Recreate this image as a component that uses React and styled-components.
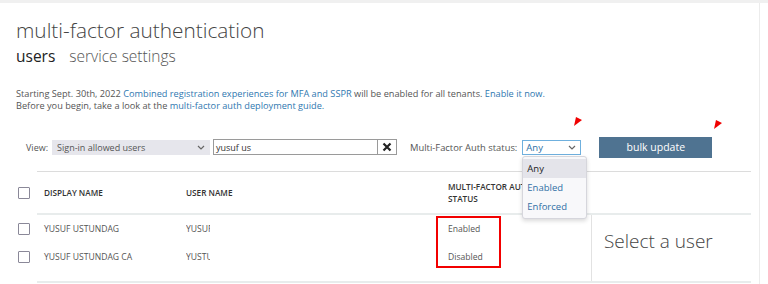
import React from "react";
import styled, { createGlobalStyle } from "styled-components";

const GlobalStyle = createGlobalStyle`
  body {
    margin: 0;
    background: #ffffff;
    font-family: "Open Sans", "Noto Sans", sans-serif;
    color: #444;
  }
`;

const Page = styled.div`
  position: relative;
  width: 768px;
  height: 284px;
  overflow: hidden;
  box-sizing: border-box;
  border-top: 3px solid #f0f0f0;
`;

const Frame = styled.div`
  width: 760px;
  height: 100%;
  box-sizing: border-box;
  border-right: 1px solid #ececec;
  padding-top: 14px;
`;

const Title = styled.h1`
  margin: 0 0 0 16px;
  font-size: 20.8px;
  line-height: 26px;
  font-weight: 300;
  color: #444;
`;

const Tabs = styled.div`
  display: flex;
  gap: 14px;
  margin: 3px 0 0 16px;
  font-size: 15.5px;
  line-height: 21px;
`;

const Tab = styled.span`
  color: ${(p) => (p.active ? "#222" : "#555")};
  font-weight: ${(p) => (p.active ? 400 : 300)};
`;

const Info = styled.div`
  margin: 21px 0 0 16px;
  font-size: 9.2px;
  line-height: 12px;
  color: #555;
`;

const Link = styled.a`
  color: #2f78b0;
  text-decoration: none;
`;

const Toolbar = styled.div`
  display: flex;
  align-items: center;
  height: 22px;
  margin-top: 24px;
  padding-left: 26px;
  font-size: 9px;
  color: #555;
`;

const Label = styled.span`
  margin-right: ${(p) => p.gap || 4}px;
  font-size: ${(p) => p.size || 9}px;
`;

const ViewSelect = styled.div`
  display: flex;
  align-items: center;
  justify-content: space-between;
  box-sizing: border-box;
  width: 158px;
  height: 15px;
  padding: 0 5px;
  background: #e6e6ec;
  color: #555;
`;

const Search = styled.div`
  display: flex;
  align-items: center;
  box-sizing: border-box;
  width: 165px;
  height: 16px;
  margin-left: 3px;
  padding-left: 2px;
  border: 1px solid #9a9a9a;
  color: #333;
`;

const ClearBtn = styled.div`
  display: flex;
  align-items: center;
  justify-content: center;
  box-sizing: border-box;
  width: 19px;
  height: 16px;
  border: 1px solid #9a9a9a;
  border-left: none;
  margin-right: 13px;
`;

const StatusWrap = styled.div`
  position: relative;
`;

const StatusSelect = styled.div`
  display: flex;
  align-items: center;
  justify-content: space-between;
  box-sizing: border-box;
  width: 59px;
  height: 15px;
  padding: 0 4px 0 3px;
  border: 1px solid #6fb0de;
  color: #2e6fa5;
  font-size: 9.5px;
`;

const Menu = styled.div`
  position: absolute;
  top: 16px;
  left: 0;
  width: 65px;
  box-sizing: border-box;
  padding: 2px 0;
  background: #f8f8fa;
  border: 1px solid #d6d6dc;
  border-radius: 3px;
  box-shadow: 0 2px 4px rgba(0, 0, 0, 0.15);
  z-index: 2;
`;

const MenuItem = styled.div`
  height: 19px;
  line-height: 19px;
  padding-left: 4px;
  font-size: 9.5px;
  color: ${(p) => (p.selected ? "#222" : "#2f6fa5")};
  background: ${(p) => (p.selected ? "#e4e4ea" : "transparent")};
`;

const BulkButton = styled.button`
  width: 113px;
  height: 21px;
  margin-left: 18px;
  border: none;
  background: #4f7391;
  color: #fff;
  font-family: "Open Sans", sans-serif;
  font-size: 10.5px;
`;

const Table = styled.div`
  margin: 13px 0 0 16px;
  width: 735px;
`;

const Row = styled.div`
  display: flex;
`;

const CheckCell = styled.div`
  width: 21px;
  display: flex;
  align-items: center;
  height: ${(p) => p.h}px;
`;

const CheckColumn = styled.div`
  display: flex;
  flex-direction: column;
`;

const Box = styled.span`
  display: block;
  width: 12px;
  height: 12px;
  margin-left: 2px;
  box-sizing: border-box;
  border: 1.5px solid #8a8898;
  border-radius: 1px;
`;

const HeadMain = styled.div`
  flex: 1;
  display: grid;
  grid-template-columns: 142px 262px 150px 1fr;
  align-items: center;
  height: 41px;
  border-top: 1px solid #dcdcdc;
  border-bottom: 2px solid #e8ecec;
`;

const HeadCell = styled.div`
  padding-left: 7px;
  font-size: 8.2px;
  line-height: 12px;
  font-weight: 600;
  color: #333;
`;

const BodyMain = styled.div`
  flex: 1;
  display: flex;
  height: 66px;
  border-bottom: 2px solid #e8ecec;
`;

const Rows = styled.div`
  width: 554px;
`;

const DataRow = styled.div`
  display: grid;
  grid-template-columns: 142px 262px 150px;
  align-items: center;
  height: 28px;
`;

const Cell = styled.div`
  padding-left: 7px;
  font-size: 8.6px;
  color: #555;
  white-space: nowrap;
  overflow: hidden;
`;

const Clip = styled.span`
  display: inline-block;
  max-width: ${(p) => p.w}px;
  overflow: hidden;
  vertical-align: top;
`;

const SidePanel = styled.div`
  flex: 1;
  border-left: 1px solid #e2e2e2;
  padding: 13px 0 0 12px;
  font-size: 19px;
  line-height: 26px;
  font-weight: 300;
  color: #444;
`;

const Highlight = styled.div`
  position: absolute;
  left: 436px;
  top: 213px;
  width: 65px;
  height: 52px;
  box-sizing: border-box;
  border: 2px solid #f20000;
`;

const Pointer = styled.svg`
  position: absolute;
  left: ${(p) => p.x}px;
  top: ${(p) => p.y}px;
`;

const Chevron = () => (
  <svg width="8" height="5" viewBox="0 0 8 5">
    <polyline points="1,1 4,4 7,1" fill="none" stroke="#666" strokeWidth="1.2" />
  </svg>
);

const Cross = () => (
  <svg width="10" height="10" viewBox="0 0 10 10">
    <path d="M1.5 1.5 L8.5 8.5 M8.5 1.5 L1.5 8.5" stroke="#222" strokeWidth="2.2" />
  </svg>
);

const Arrow = ({ x, y }) => (
  <Pointer x={x} y={y} width="10" height="10" viewBox="0 0 10 10">
    <polygon points="1,9 3,0 9,3" fill="#f00000" />
  </Pointer>
);

const users = [
  { name: "YUSUF USTUNDAG", user: "YUSUF.USTUNDAG", status: "Enabled" },
  { name: "YUSUF USTUNDAG CA", user: "YUSTUNDAGCA", status: "Disabled" },
];

export default function App() {
  return (
    <Page>
      <GlobalStyle />
      <Frame>
        <Title>multi-factor authentication</Title>
        <Tabs>
          <Tab active>users</Tab>
          <Tab>service settings</Tab>
        </Tabs>
        <Info>
          Starting Sept. 30th, 2022{" "}
          <Link>Combined registration experiences for MFA and SSPR</Link> will be
          enabled for all tenants. <Link>Enable it now.</Link>
          <br />
          Before you begin, take a look at the{" "}
          <Link>multi-factor auth deployment guide.</Link>
        </Info>
        <Toolbar>
          <Label>View:</Label>
          <ViewSelect>
            Sign-in allowed users
            <Chevron />
          </ViewSelect>
          <Search>yusuf us</Search>
          <ClearBtn>
            <Cross />
          </ClearBtn>
          <Label gap={5} size={9.4}>
            Multi-Factor Auth status:
          </Label>
          <StatusWrap>
            <StatusSelect>
              Any
              <Chevron />
            </StatusSelect>
            <Menu>
              <MenuItem selected>Any</MenuItem>
              <MenuItem>Enabled</MenuItem>
              <MenuItem>Enforced</MenuItem>
            </Menu>
          </StatusWrap>
          <BulkButton>bulk update</BulkButton>
        </Toolbar>
        <Table>
          <Row>
            <CheckCell h={43}>
              <Box />
            </CheckCell>
            <HeadMain>
              <HeadCell>DISPLAY NAME</HeadCell>
              <HeadCell>USER NAME</HeadCell>
              <HeadCell>
                MULTI-FACTOR AUTH
                <br />
                STATUS
              </HeadCell>
              <HeadCell />
            </HeadMain>
          </Row>
          <Row>
            <CheckColumn>
              {users.map((u) => (
                <CheckCell key={u.name} h={28}>
                  <Box />
                </CheckCell>
              ))}
            </CheckColumn>
            <BodyMain>
              <Rows>
                {users.map((u) => (
                  <DataRow key={u.name}>
                    <Cell>{u.name}</Cell>
                    <Cell>
                      <Clip w={24}>{u.user}</Clip>
                    </Cell>
                    <Cell>{u.status}</Cell>
                  </DataRow>
                ))}
              </Rows>
              <SidePanel>Select a user</SidePanel>
            </BodyMain>
          </Row>
        </Table>
      </Frame>
      <Highlight />
      <Arrow x={573} y={114} />
      <Arrow x={713} y={117} />
    </Page>
  );
}
